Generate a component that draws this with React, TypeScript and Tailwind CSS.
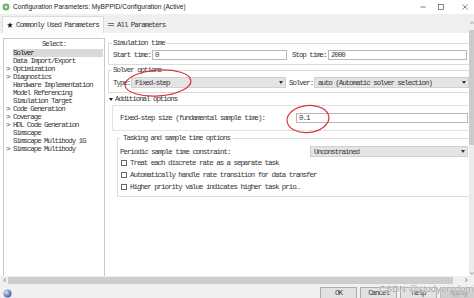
import React from 'react';

const mono = "font-['Liberation_Mono',monospace] text-[7.5px] leading-[8px] tracking-[-1.05px] text-[#383838]";

const treeItems: { label: string; expandable?: boolean; selected?: boolean }[] = [
  { label: 'Solver', selected: true },
  { label: 'Data Import/Export' },
  { label: 'Optimization', expandable: true },
  { label: 'Diagnostics', expandable: true },
  { label: 'Hardware Implementation' },
  { label: 'Model Referencing' },
  { label: 'Simulation Target' },
  { label: 'Code Generation', expandable: true },
  { label: 'Coverage', expandable: true },
  { label: 'HDL Code Generation', expandable: true },
  { label: 'Simscape' },
  { label: 'Simscape Multibody 1G' },
  { label: 'Simscape Multibody', expandable: true },
];

const checkboxes = [
  'Treat each discrete rate as a separate task',
  'Automatically handle rate transition for data transfer',
  'Higher priority value indicates higher task prio\u2026',
];

function Caret() {
  return (
    <svg width="4" height="3" viewBox="0 0 4 3" className="shrink-0">
      <path d="M0 0 L4 0 L2 3 Z" fill="#333" />
    </svg>
  );
}

// Grey dropdown as in the MATLAB dialog
function Select({ value, className }: { value: string; className: string }) {
  return (
    <div className={`h-[11px] flex items-center bg-[#e4e4e4] border border-[#d0d0d0] pl-[3px] pr-[2px] ${className}`}>
      <span className="flex-1 truncate">{value}</span>
      <Caret />
    </div>
  );
}

function Input({ value, className }: { value: string; className: string }) {
  return (
    <div className={`h-[10px] flex items-center bg-white border border-[#b8b8b8] px-[2px] ${className}`}>
      {value}
    </div>
  );
}

export default function App() {
  return (
    <div className={`w-[474px] h-[298px] bg-white relative overflow-hidden flex flex-col ${mono}`}>
      {/* Title bar */}
      <div className="h-[14px] flex items-center shrink-0">
        <svg width="8" height="8" viewBox="0 0 8 8" className="ml-[2px]">
          <circle cx="4" cy="4" r="3.4" fill="#6fae6a" />
          <circle cx="4" cy="4" r="1.4" fill="#d9ecd5" />
        </svg>
        <span className="ml-[3px] font-['Liberation_Sans',sans-serif] text-[6.6px] tracking-normal text-[#222]">
          Configuration Parameters: MyBPPID/Configuration (Active)
        </span>
        <div className="ml-auto flex items-center">
          <svg width="6" height="6" viewBox="0 0 6 6" className="mr-[12px]">
            <path d="M0.5 3 H5.5" stroke="#555" strokeWidth="0.8" />
          </svg>
          <svg width="6" height="6" viewBox="0 0 6 6" className="mr-[18px]">
            <rect x="0.5" y="0.5" width="5" height="5" fill="none" stroke="#555" strokeWidth="0.7" />
          </svg>
          <svg width="6" height="6" viewBox="0 0 6 6" className="mr-[6px]">
            <path d="M0.5 0.5 L5.5 5.5 M5.5 0.5 L0.5 5.5" stroke="#555" strokeWidth="0.7" />
          </svg>
        </div>
      </div>

      <div className="flex flex-1 min-h-0">
        <div className="flex-1 flex flex-col min-w-0">
          {/* Tabs */}
          <div className="h-[19px] shrink-0 bg-[#efefef] flex items-end pl-[2px]">
            <div className="h-[17px] w-[102px] bg-[#fbfbfb] border border-b-0 border-[#dcdcdc] flex items-center pl-[4px] gap-[3px]">
              <svg width="6" height="6" viewBox="0 0 10 10" className="shrink-0">
                <path d="M5 0.3 L6.2 3.7 L9.8 3.8 L7 6 L8 9.6 L5 7.5 L2 9.6 L3 6 L0.2 3.8 L3.8 3.7 Z" fill="#111" />
              </svg>
              <span>Commonly Used Parameters</span>
            </div>
            <div className="h-[17px] flex items-center pl-[4px] gap-[3px]">
              <svg width="6" height="5" viewBox="0 0 6 5">
                <path d="M0 1.5 H6 M0 3.5 H6" stroke="#555" strokeWidth="0.8" />
              </svg>
              <span>All Parameters</span>
            </div>
          </div>

          {/* Main area */}
          <div className="flex flex-1 min-h-0 relative">
            <div className="w-[3px] shrink-0" />
            {/* Tree */}
            <div className="w-[102px] shrink-0 mt-[5px] border border-b-0 border-[#c9c9c9]">
              <div className="h-[10px] flex items-center justify-center">Select:</div>
              {treeItems.map((item) => (
                <div key={item.label} className="h-[8px] flex">
                  <span className="w-[9px] pl-[2px] shrink-0">{item.expandable ? '>' : ''}</span>
                  <span className={`flex-1 mr-[1px] whitespace-nowrap ${item.selected ? 'bg-[#d9d9d9] text-[#222]' : ''}`}>
                    {item.label}
                  </span>
                </div>
              ))}
            </div>

            {/* Solver pane */}
            <div className="flex-1 min-w-0">
              <fieldset className="ml-[3px] mt-[6px] border border-r-0 border-[#dcdcdc] pl-[3px] pb-[4px]">
                <legend className="px-[1px]">Simulation time</legend>
                <div className="mt-[3px] flex items-center pl-[1px]">
                  <span className="w-[39px]">Start time:</span>
                  <Input value="0" className="w-[135px]" />
                  <span className="ml-[5px] w-[36px]">Stop time:</span>
                  <Input value="2000" className="w-[139px]" />
                </div>
              </fieldset>

              <fieldset className="ml-[3px] mt-[1px] border border-r-0 border-[#dcdcdc] pl-[3px] pb-[4px]">
                <legend className="px-[1px]">Solver options</legend>
                <div className="mt-[3px] flex items-center pl-[1px]">
                  <span className="w-[18px]">Type:</span>
                  <Select value="Fixed-step" className="w-[155px]" />
                  <span className="ml-[3px] w-[25px]">Solver:</span>
                  <Select value="auto (Automatic solver selection)" className="w-[155px]" />
                </div>
              </fieldset>

              <div className="mt-[2px] ml-[4px] flex items-center gap-[2px]">
                <svg width="4" height="3" viewBox="0 0 4 3">
                  <path d="M0 0 L4 0 L2 3 Z" fill="#222" />
                </svg>
                <span>Additional options</span>
              </div>

              <div className="mt-[2px] ml-[7px] h-[26px] border border-r-0 border-[#e2e2e2] rounded-l-[2px] flex items-center pl-[7px]">
                <span className="w-[176px]">Fixed-step size (fundamental sample time):</span>
                <Input value="0.1" className="w-[172px]" />
              </div>

              <fieldset className="ml-[12px] mt-[3px] border border-r-0 border-[#dcdcdc] pl-[2px] pb-[3px]">
                <legend className="px-[3px]">Tasking and sample time options</legend>
                <div className="mt-[4px] flex items-center">
                  <span className="w-[190px]">Periodic sample time constraint:</span>
                  <Select value="Unconstrained" className="w-[158px]" />
                </div>
                {checkboxes.map((label) => (
                  <div key={label} className="h-[12px] flex items-center">
                    <span className="ml-[1px] w-[6px] h-[6px] border border-[#666] bg-white shrink-0" />
                    <span className="ml-[3px] whitespace-nowrap">{label}</span>
                  </div>
                ))}
              </fieldset>
            </div>

            {/* Red annotation circles */}
            <svg className="absolute left-0 top-0 pointer-events-none" width="469" height="243" viewBox="0 33 469 243">
              <ellipse cx="158" cy="83" rx="33" ry="13" fill="none" stroke="#d8333b" strokeWidth="1.2" transform="rotate(-4 158 83)" />
              <ellipse cx="308" cy="119" rx="21" ry="13.5" fill="none" stroke="#d8333b" strokeWidth="1.2" transform="rotate(-6 308 119)" />
            </svg>
          </div>
        </div>

        {/* Vertical scrollbar */}
        <div className="w-[5px] shrink-0 flex flex-col bg-[#f0f0f0]">
          <div className="h-[16px] flex items-center justify-center">
            <svg width="4" height="3" viewBox="0 0 4 3">
              <path d="M0.3 2.7 L2 0.8 L3.7 2.7" fill="none" stroke="#666" strokeWidth="0.7" />
            </svg>
          </div>
          <div className="h-[115px] bg-[#cbcbcb]" />
          <div className="flex-1 bg-[#ebebeb]" />
          <div className="h-[6px] flex items-center justify-center">
            <svg width="4" height="3" viewBox="0 0 4 3">
              <path d="M0.3 0.3 L2 2.2 L3.7 0.3" fill="none" stroke="#666" strokeWidth="0.7" />
            </svg>
          </div>
        </div>
      </div>

      {/* Horizontal scrollbar */}
      <div className="h-[8px] shrink-0 flex items-center bg-[#f0f0f0]">
        <div className="w-[8px] flex justify-center">
          <svg width="3" height="4" viewBox="0 0 3 4">
            <path d="M2.7 0.3 L0.8 2 L2.7 3.7" fill="none" stroke="#555" strokeWidth="0.7" />
          </svg>
        </div>
        <div className="w-[445px] h-[7px] bg-[#cdcdcd]" />
        <div className="flex-1 flex justify-end pr-[6px]">
          <svg width="3" height="4" viewBox="0 0 3 4">
            <path d="M0.3 0.3 L2.2 2 L0.3 3.7" fill="none" stroke="#555" strokeWidth="0.7" />
          </svg>
        </div>
      </div>

      {/* Button bar */}
      <div className="h-[14px] shrink-0 bg-[#f0f0f0] flex items-start overflow-hidden">
        <svg width="9" height="9" viewBox="0 0 9 9" className="ml-[3px] mt-[5px]">
          <defs>
            <radialGradient id="hg" cx="0.35" cy="0.35" r="0.7">
              <stop offset="0" stopColor="#dfe8f5" />
              <stop offset="0.5" stopColor="#7f9dc8" />
              <stop offset="1" stopColor="#3e5f91" />
            </radialGradient>
          </defs>
          <circle cx="4.5" cy="4.5" r="4" fill="url(#hg)" />
        </svg>
        <div className="ml-auto mt-[3px] flex gap-[3px] -mr-[3px]">
          {['OK', 'Cancel', 'Help'].map((b) => (
            <div key={b} className="w-[37px] h-[12px] bg-[#e1e1e1] border border-[#adadad] flex items-center justify-center">
              {b}
            </div>
          ))}
          <div className="w-[37px] h-[12px] bg-[#cfcfcf] border border-[#bdbdbd] flex items-center justify-center text-[#9a9a9a]">
            Apply
          </div>
        </div>
      </div>

      {/* Watermark */}
      <div className="absolute left-[379px] top-[283px] whitespace-nowrap font-['Liberation_Sans',sans-serif] text-[9.5px] leading-[12px] tracking-normal text-[#9c9c9c] [text-shadow:0_0_1px_#fff,0_0_1px_#fff]">
        CSDN @studyer_domi
      </div>
    </div>
  );
}
